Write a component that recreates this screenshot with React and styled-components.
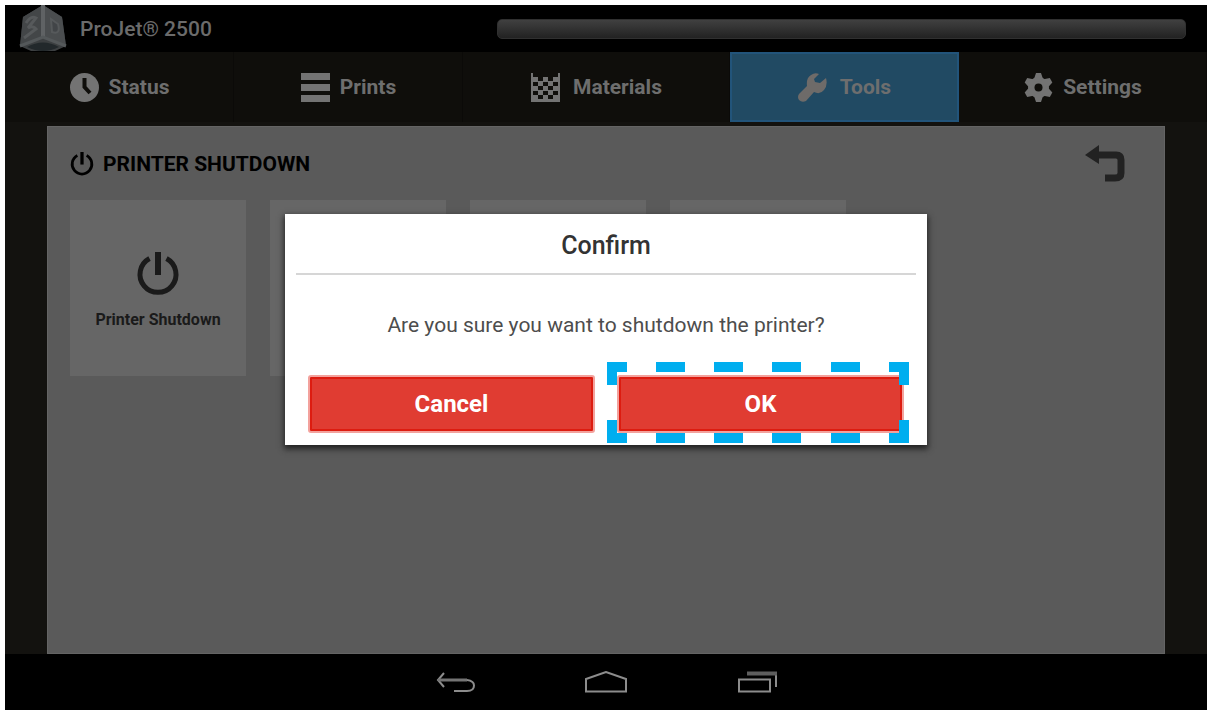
import React from 'react'
import styled, { createGlobalStyle } from 'styled-components'

const tabs = [
    { name: 'Status', Icon: ClockIcon, size: 229 },
    { name: 'Prints', Icon: BarsIcon, size: 229 },
    { name: 'Materials', Icon: MaterialsIcon, size: 267, wide: true },
    { name: 'Tools', Icon: WrenchIcon, size: 229, wide: true, active: true },
    { name: 'Settings', Icon: CogIcon, size: 248 },
]

export default function App() {
    return (
        <Screen>
            <GlobalStyle />
            <Workspace>
                <StatusBar>
                    <CubeLogo />
                    <PrinterName>ProJet® 2500</PrinterName>
                    <ProgressTrack />
                </StatusBar>
                <TabBar>
                    {tabs.map(({ name, Icon, size, wide, active }) => (
                        <Tab key={name} $size={size} $wide={wide} $active={active}>
                            <Icon />
                            {name}
                        </Tab>
                    ))}
                </TabBar>
                <Panel>
                    <PanelHeader>
                        <PowerIcon size={24} />
                        <PanelTitle>PRINTER SHUTDOWN</PanelTitle>
                        <ReturnButton aria-label="Return">
                            <ReturnIcon />
                        </ReturnButton>
                    </PanelHeader>
                    <Tiles>
                        <Tile>
                            <PowerIcon size={44} />
                            Printer Shutdown
                        </Tile>
                        <Tile disabled />
                        <Tile disabled />
                        <Tile disabled />
                    </Tiles>
                </Panel>
                <Overlay>
                    <Dialog role="dialog" aria-labelledby="confirm-title">
                        <DialogTitle id="confirm-title">Confirm</DialogTitle>
                        <Message>Are you sure you want to shutdown the printer?</Message>
                        <Actions>
                            <ActionSlot>
                                <ActionButton>Cancel</ActionButton>
                            </ActionSlot>
                            <ActionSlot>
                                <ActionButton>OK</ActionButton>
                                <Highlight />
                            </ActionSlot>
                        </Actions>
                    </Dialog>
                </Overlay>
            </Workspace>
            <SystemBar>
                <SystemButton aria-label="Back">
                    <svg width="42" height="26" viewBox="0 0 42 26" fill="none" stroke="#8c8c8c" strokeWidth="2">
                        <path d="M10 2 L4 9 L10 16" />
                        <path d="M4 9 H33" stroke="#747474" strokeWidth="3" />
                        <path d="M33 9 Q40 10 40 14.500 Q40 20 33 20 H20" />
                    </svg>
                </SystemButton>
                <SystemButton aria-label="Home">
                    <svg width="44" height="26" viewBox="0 0 44 26" fill="none" stroke="#8c8c8c" strokeWidth="2">
                        <path d="M2 20.500 V8 L22 1 L42 8 V20.500 Z" />
                    </svg>
                </SystemButton>
                <SystemButton aria-label="Recent apps">
                    <svg width="42" height="26" viewBox="0 0 42 26" fill="none" stroke="#8c8c8c" strokeWidth="2">
                        <path d="M3 8.500 H34 V20.500 H3 Z M40 2 V16" />
                        <path d="M11 2.500 H41" stroke="#5e5e5e" strokeWidth="4" />
                    </svg>
                </SystemButton>
            </SystemBar>
        </Screen>
    )
}

function CubeLogo() {
    return (
        <svg width="48" height="47" viewBox="0 0 48 47">
            <path d="M24 0 L4 12 L1 41 L12 46 H36 L47 41 L43 12 Z" fill="#3c3f41" />
            <path d="M24 0 L4 12 L1 41 L24 33 Z" fill="#434648" />
            <path d="M24 0 L43 12 L47 41 L24 33 Z" fill="#4a4d4f" />
            <path d="M8 42 Q24 33 40 42 Q24 50 8 42 Z" fill="#22282b" />
            <path d="M24 0 V33" stroke="#5f6264" strokeWidth="4" />
            <path d="M1 41 L24 32 L47 41" fill="none" stroke="#54585a" strokeWidth="3" />
            <path d="M7 18 Q12 10 17 13 L9 23 Q14 20 17 24 L5 33" fill="none" stroke="#56595b" strokeWidth="3" />
            <path d="M32 14 L39 19 Q42 30 33 27 Z" fill="#424548" stroke="#56595b" strokeWidth="2" />
        </svg>
    )
}

function ClockIcon() {
    return (
        <svg width="29" height="29" viewBox="0 0 29 29">
            <circle cx="14.500" cy="14.500" r="14.500" fill="#737373" />
            <path d="M14.500 5 V14 L20 20" fill="none" stroke="#0f0e0b" strokeWidth="4" />
        </svg>
    )
}

function BarsIcon() {
    return (
        <svg width="29" height="29" viewBox="0 0 29 29" fill="#737373">
            <path d="M0 0 H29 V7 H0 Z M0 11 H29 V18 H0 Z M0 22 H29 V29 H0 Z" />
        </svg>
    )
}

function MaterialsIcon() {
    return (
        <svg width="29" height="29" viewBox="0 0 29 29" fill="#737373">
            <path d="M0 0 H2 V26 H27 V0 H29 V29 H0 Z" />
            <path d="M2 4 H7 V9 H2 Z M12 4 H17 V9 H12 Z M22 4 H27 V9 H22 Z M7 8 H12 V13 H7 Z M17 8 H22 V13 H17 Z M2 13 H7 V18 H2 Z M12 13 H17 V18 H12 Z M22 13 H27 V18 H22 Z M7 17 H12 V22 H7 Z M17 17 H22 V22 H17 Z M2 22 H7 V27 H2 Z M12 22 H17 V27 H12 Z M22 22 H27 V27 H22 Z" />
        </svg>
    )
}

function WrenchIcon() {
    return (
        <svg width="29" height="29" viewBox="0 0 29 29" fill="#6e6b69">
            <path d="M21 1 Q17 -1 13 2 Q8 5 9 13 L1 21 Q-1 24 1 27 Q4 30 8 28 L16 19 Q22 22 26 17 Q30 12 28 5 L22 10 L17 9 L16 6 Z" />
        </svg>
    )
}

function CogIcon() {
    return (
        <svg width="29" height="29" viewBox="0 0 29 29">
            <g fill="#737373">
                <circle cx="14.500" cy="14.500" r="10.500" />
                {[0, 60, 120].map((angle) => (
                    <path key={angle} d="M12 0 H17 L19 6 V23 L17 29 H12 L10 23 V6 Z" transform={`rotate(${angle} 14.500 14.500)`} />
                ))}
            </g>
            <circle cx="14.500" cy="14.500" r="4" fill="#0f0e0b" />
        </svg>
    )
}

function PowerIcon({ size }) {
    return (
        <svg width={size} height={size} viewBox="0 0 44 44" fill="none" stroke="currentColor" strokeWidth="5">
            <path d="M13.500 6.500 A18 18 0 1 0 30.500 6.500" />
            <path d="M22 0 V23" strokeWidth="6" />
        </svg>
    )
}

function ReturnIcon() {
    return (
        <svg width="40" height="38" viewBox="0 0 40 38">
            <path d="M0 10 L14 0 V19 Z" fill="#222222" />
            <path d="M12 10 H31 Q36 10 36 15 V28 Q36 33 30 33 H20" fill="none" stroke="#222222" strokeWidth="7" />
        </svg>
    )
}

function Highlight() {
    return (
        <HighlightSvg viewBox="0 0 302 81" preserveAspectRatio="none" fill="#00aeef" aria-hidden="true">
            <path d="M0 0 H20 V10 H10 V23 H0 Z M282 0 H302 V23 H292 V10 H282 Z" />
            <path d="M0 58 H10 V71 H20 V81 H0 Z M292 58 H302 V81 H282 V71 H292 Z" />
            {[49, 107, 165, 224].map((x) => (
                <path key={x} d={`M${x} 0 h29 v10 h-29 Z M${x} 71 h29 v10 h-29 Z`} />
            ))}
        </HighlightSvg>
    )
}

const GlobalStyle = createGlobalStyle`
    * {
        box-sizing: border-box;
    }

    body {
        margin: 0;
        background: white;
        font-family: Roboto, "Liberation Sans", sans-serif;
    }

    button {
        font-family: inherit;
        border: none;
        padding: 0;
        cursor: pointer;
    }

    svg {
        display: block;
        flex-shrink: 0;
    }
`

const Screen = styled.div`
    min-height: 100vh;
    padding: 5px 5px 6px;
    display: flex;
    flex-direction: column;
`

const Workspace = styled.div`
    flex: 1;
    position: relative;
    display: flex;
    flex-direction: column;
    background: #13120f;
`

const StatusBar = styled.header`
    height: 47px;
    display: flex;
    align-items: center;
    background: black;
    padding: 0 21px 0 14px;
`

const PrinterName = styled.h1`
    margin: 0 0 0 13px;
    flex: 1;
    color: #6b6b6b;
    font-size: 21px;
    font-weight: 500;
`

const ProgressTrack = styled.div`
    width: 59%;
    height: 20px;
    border: 1px solid #303030;
    border-radius: 5px;
    background: linear-gradient(#404040, #222222);
`

const TabBar = styled.nav`
    display: flex;
    height: 70px;
    background: #0f0e0b;
`

const Tab = styled.button`
    flex: ${({ $size }) => $size} 1 0;
    display: flex;
    align-items: center;
    justify-content: center;
    gap: ${({ $wide }) => ($wide ? 13 : 10)}px;
    background: ${({ $active }) => ($active ? '#214a63' : 'none')};
    box-shadow: ${({ $active }) => ($active ? 'inset 0 0 0 2px #22547a' : 'inset -1px 0 #0b0a08')};
    color: #6e6e6e;
    font-size: 21px;
    font-weight: 700;
`

const Panel = styled.main`
    flex: 1;
    margin: 4px 42px 0;
    padding: 18px 22px;
    background: #5a5a5a;
    border: 1px solid #646464;
`

const PanelHeader = styled.div`
    height: 38px;
    display: flex;
    align-items: center;
    gap: 9px;
`

const PanelTitle = styled.h2`
    margin: 0;
    flex: 1;
    font-size: 21px;
    font-weight: 700;
`

const ReturnButton = styled.button`
    background: none;
    margin-right: 17px;
`

const Tiles = styled.div`
    margin-top: 17px;
    display: flex;
    gap: 24px;
`

const Tile = styled.button`
    width: 176px;
    height: 176px;
    padding-top: 4px;
    display: flex;
    flex-direction: column;
    align-items: center;
    justify-content: center;
    gap: 14px;
    background: #666666;
    color: #1a1a1a;
    font-size: 16px;
    font-weight: 700;
`

const Overlay = styled.div`
    position: absolute;
    inset: 0;
    display: flex;
    align-items: center;
    justify-content: center;
`

const Dialog = styled.section`
    width: 642px;
    padding: 0 11px 12px;
    background: white;
    box-shadow: 0 3px 6px 1px #222222;
`

const DialogTitle = styled.h2`
    margin: 0;
    height: 61px;
    line-height: 64px;
    border-bottom: 2px solid #d6d6d6;
    color: #333333;
    font-size: 25px;
    font-weight: 500;
    text-align: center;
`

const Message = styled.p`
    margin: 0;
    line-height: 100px;
    color: #4d4d4d;
    font-size: 21px;
    text-align: center;
`

const Actions = styled.div`
    display: flex;
    gap: 22px;
    padding: 0 12px;
`

const ActionSlot = styled.div`
    flex: 1;
    position: relative;
`

const ActionButton = styled.button`
    display: block;
    width: 100%;
    height: 58px;
    border: 2px solid #f3a29d;
    border-radius: 3px;
    background: #e03c32;
    box-shadow: inset 0 0 0 2px #dd1c10;
    color: white;
    font-size: 24px;
    font-weight: 700;
`

const HighlightSvg = styled.svg`
    position: absolute;
    top: -13px;
    left: -10px;
    width: calc(100% + 15px);
    height: 81px;
    pointer-events: none;
`

const SystemBar = styled.footer`
    height: 56px;
    padding-top: 4px;
    display: flex;
    align-items: center;
    justify-content: center;
    gap: 108px;
    background: black;
`

const SystemButton = styled.button`
    background: none;
`
